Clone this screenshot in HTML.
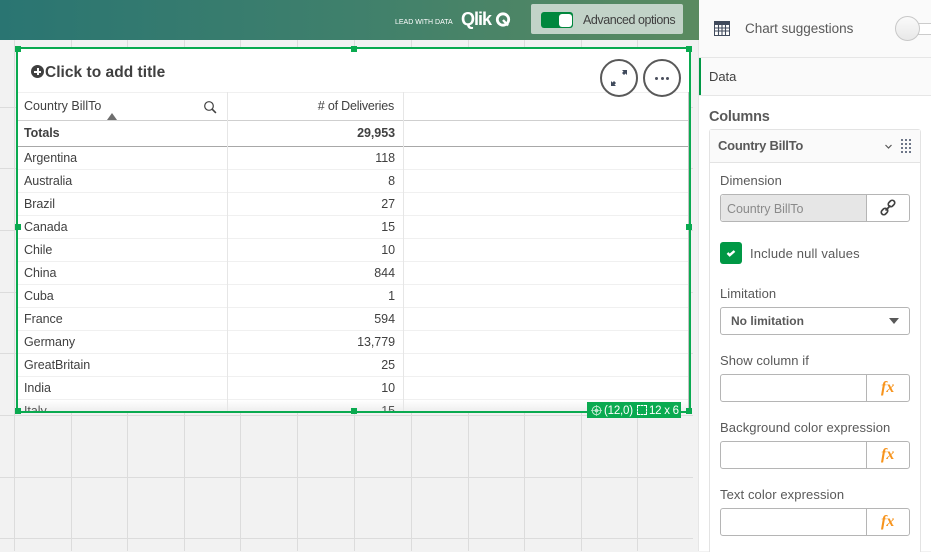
<!DOCTYPE html>
<html><head><meta charset="utf-8">
<style>
html,body{margin:0;padding:0}
body{width:931px;height:551px;overflow:hidden;position:relative;background:#f2f2f2;font-family:"Liberation Sans",sans-serif;color:#404040}
.a{position:absolute}
.t{position:absolute;white-space:nowrap;font-size:12.5px;line-height:16px;letter-spacing:-.05px;color:#404040}
.r{text-align:right}
.vg{position:absolute;top:40px;height:511px;width:1px;background:#dcdcdc}
.hg{position:absolute;left:0;width:693px;height:1px;background:#dcdcdc}
.h{position:absolute;width:6px;height:6px;background:#0aaa50;z-index:5}
.rl{position:absolute;left:18px;width:671px;height:1px;background:#f0f0f0}
.lb{position:absolute;left:720px;white-space:nowrap;font-size:13px;line-height:16px;letter-spacing:.05px;color:#595959}
.inp{position:absolute;left:720px;width:188px;height:26px;border:1px solid #b5b5b5;border-radius:3px;background:#fff}
.inp i{position:absolute;left:145px;top:0;width:1px;height:26px;background:#b5b5b5}
.fx{position:absolute;left:160px;top:4px;font:italic bold 16px "Liberation Serif",serif;color:#f7941d;line-height:18px}
</style></head><body>
<!-- header -->
<div class="a" style="left:0;top:0;width:699px;height:40px;background:linear-gradient(90deg,#2a7572 0%,#3f806c 50%,#5a8a60 100%)"></div>
<div class="t" style="left:395px;top:18px;font-size:7px;line-height:10px;color:#fff;letter-spacing:0">LEAD WITH DATA</div>
<div class="t" style="left:461px;top:10px;font-size:18px;line-height:18px;font-weight:bold;color:#fff;letter-spacing:-1px">Qlik</div>
<svg class="a" style="left:495px;top:12px" width="17" height="16" viewBox="0 0 17 16"><circle cx="8" cy="7.5" r="5.7" fill="none" stroke="#fff" stroke-width="2.8"/><path d="M8 8l5 5.5" stroke="#fff" stroke-width="2.4"/></svg>
<div class="a" style="left:531px;top:4px;width:152px;height:30px;background:#c2d3c8;border-radius:2px"></div>
<div class="a" style="left:541px;top:12px;width:32px;height:16px;background:#00873d;border-radius:3px"></div>
<div class="a" style="left:559px;top:14px;width:13px;height:13px;background:#fff;border-radius:3px"></div>
<div class="t" style="left:583px;top:12px;font-size:12.5px;letter-spacing:-.45px;color:#404040">Advanced options</div>

<!-- grid -->
<div class="vg" style="left:14px"></div><div class="vg" style="left:71px"></div><div class="vg" style="left:127px"></div><div class="vg" style="left:184px"></div><div class="vg" style="left:240px"></div><div class="vg" style="left:297px"></div><div class="vg" style="left:354px"></div><div class="vg" style="left:411px"></div><div class="vg" style="left:468px"></div><div class="vg" style="left:524px"></div><div class="vg" style="left:581px"></div><div class="vg" style="left:637px"></div>
<div class="hg" style="top:107px"></div><div class="hg" style="top:168px"></div><div class="hg" style="top:230px"></div><div class="hg" style="top:292px"></div><div class="hg" style="top:353px"></div><div class="hg" style="top:415px"></div><div class="hg" style="top:477px"></div><div class="hg" style="top:538px"></div>

<!-- chart card -->
<div class="a" style="left:16px;top:47px;width:675px;height:366px;background:#fff"></div>
<div class="a" style="left:31px;top:65px;width:13px;height:13px;border-radius:50%;background:#404040"></div>
<div class="a" style="left:34px;top:70.5px;width:7px;height:2px;background:#fff"></div>
<div class="a" style="left:36.5px;top:68px;width:2px;height:7px;background:#fff"></div>
<div class="t" style="left:45px;top:63px;font-size:15.5px;line-height:20px;font-weight:bold;letter-spacing:.03px">Click to add title</div>
<div class="a" style="left:600px;top:59px;width:34px;height:34px;border:2px solid #595959;border-radius:50%;background:#fff;z-index:3"></div>
<div class="a" style="left:643px;top:59px;width:34px;height:34px;border:2px solid #595959;border-radius:50%;background:#fff;z-index:3"></div>
<svg class="a" style="left:600px;top:59px;z-index:4" width="38" height="38" viewBox="0 0 38 38"><path d="M22 11h5v5l-1.5-1.5-1.5 1.5-2-2 1.5-1.5zM16 27h-5v-5l1.5 1.5 1.5-1.5 2 2-1.5 1.5z" fill="#404a5c"/></svg>
<div class="a" style="left:655px;top:77px;width:3px;height:3px;border-radius:50%;background:#4a4f5c;z-index:4"></div>
<div class="a" style="left:660.5px;top:77px;width:3px;height:3px;border-radius:50%;background:#4a4f5c;z-index:4"></div>
<div class="a" style="left:666px;top:77px;width:3px;height:3px;border-radius:50%;background:#4a4f5c;z-index:4"></div>

<!-- table -->
<div class="rl" style="top:92px"></div>
<div class="a" style="left:18px;top:120px;width:671px;height:1px;background:#cfcfcf"></div>
<div class="a" style="left:18px;top:146px;width:671px;height:1px;background:#a8a8a8"></div>
<div class="rl" style="top:169px"></div><div class="rl" style="top:192px"></div><div class="rl" style="top:215px"></div><div class="rl" style="top:238px"></div><div class="rl" style="top:261px"></div><div class="rl" style="top:284px"></div><div class="rl" style="top:307px"></div><div class="rl" style="top:330px"></div><div class="rl" style="top:353px"></div><div class="rl" style="top:376px"></div><div class="rl" style="top:399px"></div>
<div class="a" style="left:227px;top:92px;width:1px;height:319px;background:#e6e6e6"></div>
<div class="a" style="left:403px;top:92px;width:1px;height:319px;background:#e6e6e6"></div>
<div class="a" style="left:688px;top:92px;width:1px;height:319px;background:#c4c4c4"></div>
<div class="t" style="left:24px;top:98px;letter-spacing:.02px">Country BillTo</div>
<svg class="a" style="left:203px;top:100px" width="15" height="15" viewBox="0 0 15 15"><circle cx="6" cy="6" r="4.3" fill="none" stroke="#404040" stroke-width="1.2"/><path d="M9.3 9.3l3.6 3.6" stroke="#404040" stroke-width="1.6"/></svg>
<div class="a" style="left:107px;top:113px;width:0;height:0;border-left:5px solid transparent;border-right:5px solid transparent;border-bottom:7px solid #6e6e6e"></div>
<div class="t r" style="left:240px;width:154px;top:98px;letter-spacing:-.2px"># of Deliveries</div>
<div class="t" style="left:24px;top:125px;font-weight:bold">Totals</div>
<div class="t r" style="left:240px;width:155px;top:125px;font-weight:bold">29,953</div>

<div class="t" style="left:24px;top:150px">Argentina</div><div class="t r" style="left:240px;width:155px;top:150px">118</div>
<div class="t" style="left:24px;top:173px">Australia</div><div class="t r" style="left:240px;width:155px;top:173px">8</div>
<div class="t" style="left:24px;top:196px">Brazil</div><div class="t r" style="left:240px;width:155px;top:196px">27</div>
<div class="t" style="left:24px;top:219px">Canada</div><div class="t r" style="left:240px;width:155px;top:219px">15</div>
<div class="t" style="left:24px;top:242px">Chile</div><div class="t r" style="left:240px;width:155px;top:242px">10</div>
<div class="t" style="left:24px;top:265px">China</div><div class="t r" style="left:240px;width:155px;top:265px">844</div>
<div class="t" style="left:24px;top:288px">Cuba</div><div class="t r" style="left:240px;width:155px;top:288px">1</div>
<div class="t" style="left:24px;top:311px">France</div><div class="t r" style="left:240px;width:155px;top:311px">594</div>
<div class="t" style="left:24px;top:334px">Germany</div><div class="t r" style="left:240px;width:155px;top:334px">13,779</div>
<div class="t" style="left:24px;top:357px">GreatBritain</div><div class="t r" style="left:240px;width:155px;top:357px">25</div>
<div class="t" style="left:24px;top:380px">India</div><div class="t r" style="left:240px;width:155px;top:380px">10</div>
<div class="a" style="left:18px;top:400px;width:670px;height:11px;overflow:hidden;background:linear-gradient(180deg,#fff,#efefef)">
<div class="a" style="left:209px;top:0;width:1px;height:11px;background:#e6e6e6"></div>
<div class="a" style="left:385px;top:0;width:1px;height:11px;background:#e6e6e6"></div>
<div class="t" style="left:6px;top:3px;color:#555">Italy</div><div class="t r" style="left:222px;width:155px;top:3px;color:#555">15</div>
</div>

<!-- selection -->
<div class="a" style="left:16px;top:47px;width:671px;height:362px;border:2px solid #0aaa50;z-index:4"></div>
<div class="h" style="left:15px;top:46px"></div><div class="h" style="left:351px;top:46px"></div><div class="h" style="left:686px;top:46px"></div>
<div class="h" style="left:15px;top:224px"></div><div class="h" style="left:686px;top:224px"></div>
<div class="h" style="left:15px;top:408px"></div><div class="h" style="left:351px;top:408px"></div><div class="h" style="left:686px;top:408px"></div>
<div class="a" style="left:587px;top:402px;width:94px;height:16px;background:#0aaa50;z-index:6"></div>
<svg class="a" style="left:591px;top:405px;z-index:7" width="11" height="11" viewBox="0 0 11 11"><circle cx="5.5" cy="5.5" r="4.3" fill="none" stroke="#bfe8cf" stroke-width="1"/><circle cx="5.5" cy="5.5" r="1.8" fill="#bfe8cf"/><path d="M5.5 0v11M0 5.5h11" stroke="#bfe8cf" stroke-width=".7"/></svg>
<div class="t" style="left:604px;top:403px;color:#fff;font-size:11.5px;letter-spacing:-.2px;z-index:7">(12,0)</div>
<div class="a" style="left:637px;top:405px;width:8px;height:8px;border:1px dashed #fff;z-index:7"></div>
<div class="t" style="left:649px;top:403px;color:#fff;font-size:11.5px;letter-spacing:-.25px;z-index:7">12 x 6</div>

<!-- side panel -->
<div class="a" style="left:698px;top:40px;width:1px;height:511px;background:#e6e6e6"></div>
<div class="a" style="left:699px;top:0;width:232px;height:551px;background:#fff"></div>
<div class="a" style="left:699px;top:0;width:232px;height:57px;background:#fafafa;border-bottom:1px solid #e6e6e6"></div>
<svg class="a" style="left:714px;top:21px" width="16" height="15" viewBox="0 0 16 15"><rect x=".5" y=".5" width="15" height="14" fill="#fff" stroke="#404a5c"/><rect x="0" y="0" width="16" height="4" fill="#404a5c"/><path d="M1 7h14M1 10h14M4.5 4v10M8 4v10M11.5 4v10" stroke="#404a5c" stroke-width="1.1"/></svg>
<div class="t" style="left:745px;top:21px;font-size:13.5px;color:#595959;letter-spacing:-.03px">Chart suggestions</div>
<div class="a" style="left:918px;top:23px;width:20px;height:10px;border:1px solid #ccc;background:#fff"></div>
<div class="a" style="left:895px;top:16px;width:23px;height:23px;border:1px solid #c8c8c8;border-radius:50%;background:linear-gradient(180deg,#fafafa,#e8e8e8)"></div>
<div class="a" style="left:699px;top:58px;width:232px;height:37px;background:#fafafa;border-bottom:1px solid #e6e6e6"></div>
<div class="a" style="left:699px;top:58px;width:2px;height:37px;background:#009845"></div>
<div class="t" style="left:709px;top:69px;font-size:13px;color:#404040">Data</div>
<div class="t" style="left:709px;top:109px;font-size:14.5px;font-weight:bold;color:#595959;letter-spacing:-.2px">Columns</div>
<div class="a" style="left:709px;top:129px;width:210px;height:422px;border:1px solid #e3e3e3;border-bottom:0;border-radius:3px 3px 0 0;background:#fff"></div>
<div class="a" style="left:710px;top:130px;width:210px;height:32px;background:#fafafa;border-bottom:1px solid #e3e3e3"></div>
<div class="t" style="left:718px;top:138px;font-size:13px;font-weight:bold;color:#595959;letter-spacing:-.25px">Country BillTo</div>
<svg class="a" style="left:884px;top:143px" width="9" height="7" viewBox="0 0 9 7"><path d="M1.5 2l3 3 3-3" fill="none" stroke="#595959" stroke-width="1.2"/></svg>
<svg class="a" style="left:900px;top:139px" width="12" height="14" viewBox="0 0 12 14"><g fill="#6d7688"><rect x="1" y="0" width="2" height="2"/><rect x="5" y="0" width="2" height="2"/><rect x="9" y="0" width="2" height="2"/><rect x="1" y="4" width="2" height="2"/><rect x="5" y="4" width="2" height="2"/><rect x="9" y="4" width="2" height="2"/><rect x="1" y="8" width="2" height="2"/><rect x="5" y="8" width="2" height="2"/><rect x="9" y="8" width="2" height="2"/><rect x="1" y="12" width="2" height="2"/><rect x="5" y="12" width="2" height="2"/><rect x="9" y="12" width="2" height="2"/></g></svg>
<div class="lb" style="top:173px">Dimension</div>
<div class="inp" style="top:194px"><i></i><div class="a" style="left:0;top:0;width:145px;height:26px;background:#e6e6e6;border-radius:3px 0 0 3px"></div></div>
<div class="t" style="left:727px;top:201px;color:#8a8a8a;font-size:12.5px">Country BillTo</div>
<svg class="a" style="left:879px;top:199px" width="18" height="18" viewBox="0 0 18 18"><g fill="none" stroke="#404040" stroke-width="1.7"><rect x="9" y="2" width="7" height="5" rx="2.5" transform="rotate(-45 12.5 4.5)"/><rect x="2" y="10" width="7" height="5" rx="2.5" transform="rotate(-45 5.5 12.5)"/><path d="M6.5 11.5l5-5"/></g></svg>
<div class="a" style="left:720px;top:242px;width:22px;height:22px;background:#009845;border-radius:3px"></div>
<svg class="a" style="left:725px;top:248px" width="12" height="10" viewBox="0 0 12 10"><path d="M2.5 5l2.2 2.2L9.5 3" fill="none" stroke="#fff" stroke-width="2.4"/></svg>
<div class="lb" style="left:750px;top:246px;letter-spacing:.15px">Include null values</div>
<div class="lb" style="top:286px">Limitation</div>
<div class="a" style="left:720px;top:307px;width:188px;height:26px;border:1px solid #b5b5b5;border-radius:3px;background:#fff"></div>
<div class="t" style="left:731px;top:313px;font-weight:bold;font-size:12px;color:#595959;letter-spacing:.02px">No limitation</div>
<div class="a" style="left:889px;top:318px;width:0;height:0;border-left:5px solid transparent;border-right:5px solid transparent;border-top:6px solid #595959"></div>
<div class="lb" style="top:353px">Show column if</div>
<div class="inp" style="top:374px"><i></i><span class="fx">fx</span></div>
<div class="lb" style="top:420px;letter-spacing:.1px">Background color expression</div>
<div class="inp" style="top:441px"><i></i><span class="fx">fx</span></div>
<div class="lb" style="top:487px;letter-spacing:.1px">Text color expression</div>
<div class="inp" style="top:508px"><i></i><span class="fx">fx</span></div>
</body></html>
